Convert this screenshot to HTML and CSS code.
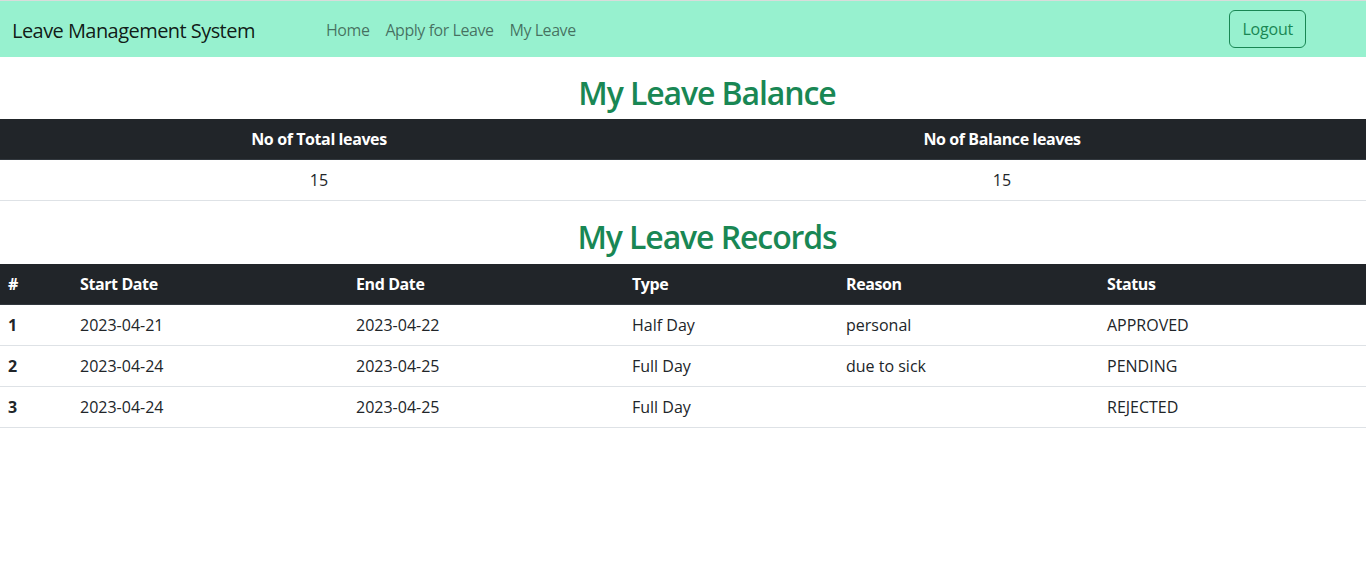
FILE: index.html
```html
<!DOCTYPE html>
<html lang="en">
<head>
<meta charset="utf-8">
<title>Leave Management System</title>
<link rel="stylesheet" href="styles.css">
</head>
<body>
<nav class="navbar">
  <a class="brand" href="#">Leave Management System</a>
  <ul class="nav-links">
    <li><a href="#">Home</a></li>
    <li><a href="#">Apply for Leave</a></li>
    <li><a href="#">My Leave</a></li>
  </ul>
  <button class="btn-logout" type="button">Logout</button>
</nav>

<h2 class="section-title">My Leave Balance</h2>
<table class="table table-balance">
  <thead>
    <tr><th class="col-total">No of Total leaves</th><th>No of Balance leaves</th></tr>
  </thead>
  <tbody>
    <tr><td>15</td><td>15</td></tr>
  </tbody>
</table>

<h2 class="section-title">My Leave Records</h2>
<table class="table table-records">
  <thead>
    <tr>
      <th class="c-num">#</th>
      <th class="c-start">Start Date</th>
      <th class="c-end">End Date</th>
      <th class="c-type">Type</th>
      <th class="c-reason">Reason</th>
      <th>Status</th>
    </tr>
  </thead>
  <tbody>
    <tr><th>1</th><td>2023-04-21</td><td>2023-04-22</td><td>Half Day</td><td>personal</td><td>APPROVED</td></tr>
    <tr><th>2</th><td>2023-04-24</td><td>2023-04-25</td><td>Full Day</td><td>due to sick</td><td>PENDING</td></tr>
    <tr><th>3</th><td>2023-04-24</td><td>2023-04-25</td><td>Full Day</td><td></td><td>REJECTED</td></tr>
  </tbody>
</table>
</body>
</html>
```

FILE: styles.css
```css
* { box-sizing: border-box; }

html, body {
  margin: 0;
  padding: 0;
}

body {
  font-family: "Open Sans", "Noto Sans", sans-serif;
  font-size: 16px;
  line-height: 1.5;
  color: #212529;
  background: #fff;
  border-top: 1px solid #d9dcdb;
}

.navbar {
  display: flex;
  align-items: center;
  height: 56px;
  padding: 0 60px 0 12px;
  background: #97f1cf;
}

.brand {
  font-size: 20px;
  line-height: 30px;
  padding-top: 3px;
  letter-spacing: -0.55px;
  color: rgba(0, 0, 0, 0.9);
  text-decoration: none;
  width: 306px;
  flex: none;
}

.nav-links {
  display: flex;
  list-style: none;
  margin: 0;
  padding: 0;
  flex: 1;
}

.nav-links a {
  display: block;
  padding: 9px 8px 7px;
  letter-spacing: -0.45px;
  color: rgba(0, 0, 0, 0.55);
  text-decoration: none;
}

.btn-logout {
  font-family: inherit;
  font-size: 16px;
  line-height: 24px;
  padding: 6px 12px;
  letter-spacing: -0.2px;
  color: #198754;
  background: transparent;
  border: 1px solid #198754;
  border-radius: 6px;
}

.section-title {
  margin: 17px 0 7px;
  padding-left: 48px;
  font-size: 32px;
  font-weight: 600;
  letter-spacing: -1.1px;
  line-height: 1.2;
  color: #198754;
  text-align: center;
}

.table {
  width: 100%;
  border-collapse: collapse;
  table-layout: fixed;
}

.table th,
.table td {
  padding: 8px;
  text-align: left;
  border-bottom: 1px solid #dee2e6;
  white-space: nowrap;
}

.table thead th {
  background: #212529;
  color: #fff;
  font-weight: 700;
  letter-spacing: -0.4px;
  border-bottom-color: #32383e;
}

.table tbody th {
  font-weight: 700;
}

.table-balance th,
.table-balance td {
  text-align: center;
}

.col-total { width: 638px; }

.c-num { width: 72px; }
.c-start { width: 276px; }
.c-end { width: 276px; }
.c-type { width: 214px; }
.c-reason { width: 261px; }
```
